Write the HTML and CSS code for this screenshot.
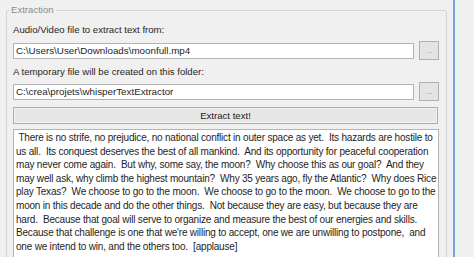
FILE: index.html
```html
<!DOCTYPE html>
<html lang="en">
<head>
  <meta charset="UTF-8">
  <title>Whisper Text Extractor</title>
  <link rel="stylesheet" href="styles.css">
</head>
<body>
  <div class="main">
    <fieldset class="group">
      <legend>Extraction</legend>
      <div class="label first">Audio/Video file to extract text from:</div>
      <div class="row">
        <div class="field">C:\Users\User\Downloads\moonfull.mp4</div>
        <button class="browse">...</button>
      </div>
      <div class="label second">A temporary file will be created on this folder:</div>
      <div class="row tight">
        <div class="field">C:\crea\projets\whisperTextExtractor</div>
        <button class="browse">...</button>
      </div>
      <button class="extract">Extract text!</button>
      <div class="output"> There is no strife, no prejudice, no national conflict in outer space as yet.  Its hazards are hostile to
us all.  Its conquest deserves the best of all mankind.  And its opportunity for peaceful cooperation
may never come again.  But why, some say, the moon?  Why choose this as our goal?  And they
may well ask, why climb the highest mountain?  Why 35 years ago, fly the Atlantic?  Why does Rice
play Texas?  We choose to go to the moon.  We choose to go to the moon.  We choose to go to the
moon in this decade and do the other things.  Not because they are easy, but because they are
hard.  Because that goal will serve to organize and measure the best of our energies and skills.
Because that challenge is one that we're willing to accept, one we are unwilling to postpone,  and
one we intend to win, and the others too.  [applause]</div>
    </fieldset>
  </div>
  <div class="edge"></div>
</body>
</html>
```

FILE: styles.css
```css
body {
  font-family: "Liberation Sans", Arial, sans-serif;
  background-color: #f0f0f0;
  margin: 0;
  padding: 0;
  display: flex;
  height: 257px;
  overflow: hidden;
}
.main {
  width: 453px;
  flex-shrink: 0;
}
.group {
  box-sizing: border-box;
  width: 441px;
  min-width: 0;
  height: 300px;
  margin: 3px 0 0 6px;
  padding: 6px 7px 0 6px;
  border: 1px solid #d2d2d2;
  border-radius: 3px 3px 0 0;
}
.group legend {
  margin-left: -4px;
  padding: 0 2px;
  height: 14px;
  line-height: 14px;
  font-size: 9.6px;
  color: #8c8c8c;
}
.label {
  height: 14px;
  line-height: 14px;
  font-size: 9.6px;
  color: #262626;
}
.row {
  display: flex;
  align-items: center;
  gap: 5px;
  height: 19px;
  margin-top: 4px;
}
.row.tight {
  margin-top: 3px;
}
.label.second {
  margin-top: 5px;
}
.field {
  flex: 1;
  height: 16px;
  box-sizing: border-box;
  padding: 0 2px;
  background-color: #fff;
  border: 1px solid #b4b4b4;
  font-size: 9.8px;
  line-height: 14px;
  color: #1e1e1e;
  white-space: nowrap;
}
.browse {
  width: 20px;
  height: 19px;
  padding: 0;
  background-color: #e4e4e4;
  border: 1px solid #b0b0b0;
  border-radius: 0;
  font-family: inherit;
  font-size: 8px;
  line-height: 12px;
  color: #8a8a8a;
}
.extract {
  display: block;
  width: 425px;
  height: 17px;
  margin-top: 6px;
  padding: 0;
  background-color: #e6e6e6;
  border: 1px solid #adadad;
  border-radius: 0;
  box-shadow: inset 0 0 0 1px #f2f2f2;
  font-family: inherit;
  font-size: 9.6px;
  line-height: 15px;
  color: #1e1e1e;
}
.output {
  margin-top: 5px;
  height: 200px;
  padding: 1px 2px;
  background-color: #fff;
  border: 1px solid #b4b4b4;
  font-size: 10px;
  letter-spacing: -0.2px;
  line-height: 13.6px;
  color: #1e1e1e;
  white-space: pre;
  overflow: hidden;
}
.edge {
  width: 2px;
  flex-shrink: 0;
  background-color: #79a3d8;
}
```
